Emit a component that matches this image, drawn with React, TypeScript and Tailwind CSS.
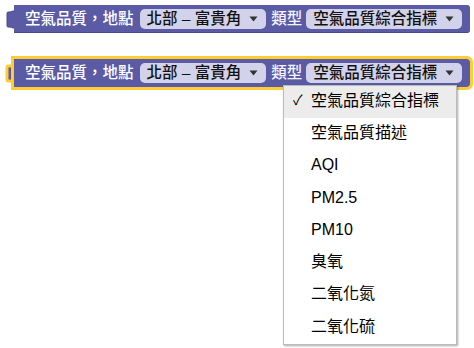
const font = { fontFamily: '"Liberation Sans", "Noto Sans CJK TC", sans-serif' };

const MENU = ['空氣品質綜合指標', '空氣品質描述', 'AQI', 'PM2.5', 'PM10', '臭氧', '二氧化氮', '二氧化硫'];

function Tab({ selected }: { selected?: boolean }) {
  return (
    <svg width="9" height="28" viewBox="0 0 9 28" className="block shrink-0 -mr-px overflow-visible">
      <path
        d="M9 0 V6 L7 6 C6 6 5 7 4 7 L2 7 C1 7 1 8 1 9 L1 20 C1 21 1 22 2 22 L4 22 C5 22 6 23 7 23 L9 23 V28"
        fill="#5b5ba5"
        stroke={selected ? '#fc3' : '#48488a'}
        strokeWidth={selected ? 3 : 1}
      />
    </svg>
  );
}

function Arrow() {
  return (
    <svg width="9" height="6" viewBox="0 0 9 6" className="block ml-[8px]">
      <path d="M0.5 0.5 H8.5 L4.5 5.5 Z" fill="#333" />
    </svg>
  );
}

function Field({ label }: { label: string }) {
  return (
    <div className="flex items-center h-[20px] rounded-[5px] bg-[#d2d2ea] pl-[7px] pr-[8px] text-[#111]">
      <span className="leading-none">{label}</span>
      <Arrow />
    </div>
  );
}

function Block({ selected }: { selected?: boolean }) {
  return (
    <div className="flex items-stretch h-[28px]">
      <Tab selected={selected} />
      <div
        className={`flex items-center w-[456px] bg-[#5b5ba5] rounded-r-[3px] pl-[11px] text-[15.5px] font-medium ${
          selected ? 'outline-[3px] outline outline-[#fc3]' : 'border-b border-[#48488a]'
        }`}
      >
        <span className="text-white leading-none">空氣品質，地點</span>
        <div className="ml-[6px]">
          <Field label="北部 – 富貴角" />
        </div>
        <span className="text-[#f4f4ff] leading-none ml-[5px]">類型</span>
        <div className="ml-[4px]">
          <Field label="空氣品質綜合指標" />
        </div>
      </div>
    </div>
  );
}

export default function App() {
  return (
    <div className="relative w-[474px] h-[348px] bg-white overflow-hidden pt-[5px] pl-[6px]" style={font}>
      <Block />
      <div className="mt-[26px]">
        <Block selected />
      </div>

      {/* dropdown menu */}
      <div className="absolute left-[283px] top-[85px] w-[174px] h-[260px] bg-white border border-[#bbb] shadow-[1px_1px_2px_rgba(0,0,0,0.35)] text-[16px] text-black">
        {MENU.map((m, i) => (
          <div
            key={m}
            className={`relative flex items-center h-[32.3px] pl-[27px] pb-[3px] ${i === 0 ? 'bg-[#ececec]' : ''}`}
          >
            {i === 0 && <span className="absolute left-[9px] text-[14px]">✓</span>}
            <span className="leading-none">{m}</span>
          </div>
        ))}
      </div>
    </div>
  );
}
